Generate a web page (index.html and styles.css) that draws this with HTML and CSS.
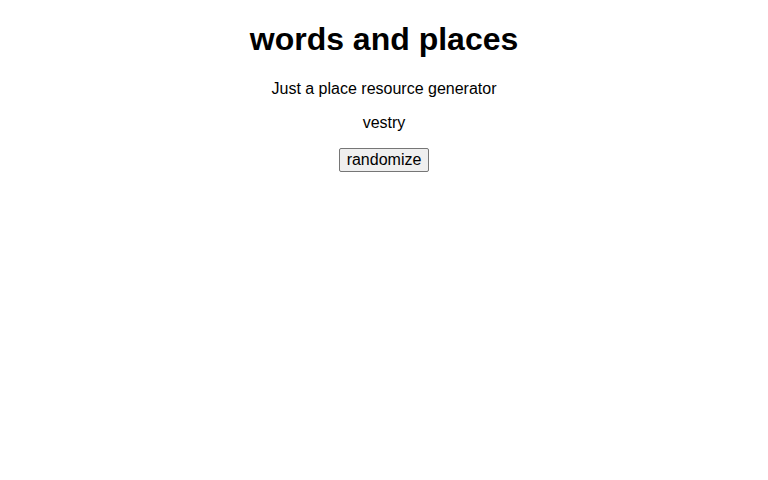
FILE: index.html
```html
<!DOCTYPE html>
<html lang="en">
<head>
<meta charset="utf-8">
<title>words and places</title>
<link rel="stylesheet" href="styles.css">
</head>
<body>
<main class="app">
  <h1 class="title">words and places</h1>
  <p class="tagline">Just a place resource generator</p>
  <p class="word">vestry</p>
  <button class="randomize" type="button">randomize</button>
</main>
</body>
</html>
```
FILE: styles.css
```css
body {
  margin: 0 8px;
  font-family: "Liberation Sans", Arial, sans-serif;
  color: #000;
  background: #fff;
}

.app {
  text-align: center;
  padding-top: 21.44px;
}

.title {
  font-size: 32px;
  font-weight: bold;
  margin: 0 0 21.44px;
}

.tagline,
.word {
  font-size: 16px;
  margin: 16px 0;
}

.randomize {
  font-family: "Liberation Sans", Arial, sans-serif;
  font-size: 16px;
  color: #000;
  background: #efefef;
  border: 1px solid #767676;
  border-radius: 2px;
  padding: 2px 7px;
}
```
